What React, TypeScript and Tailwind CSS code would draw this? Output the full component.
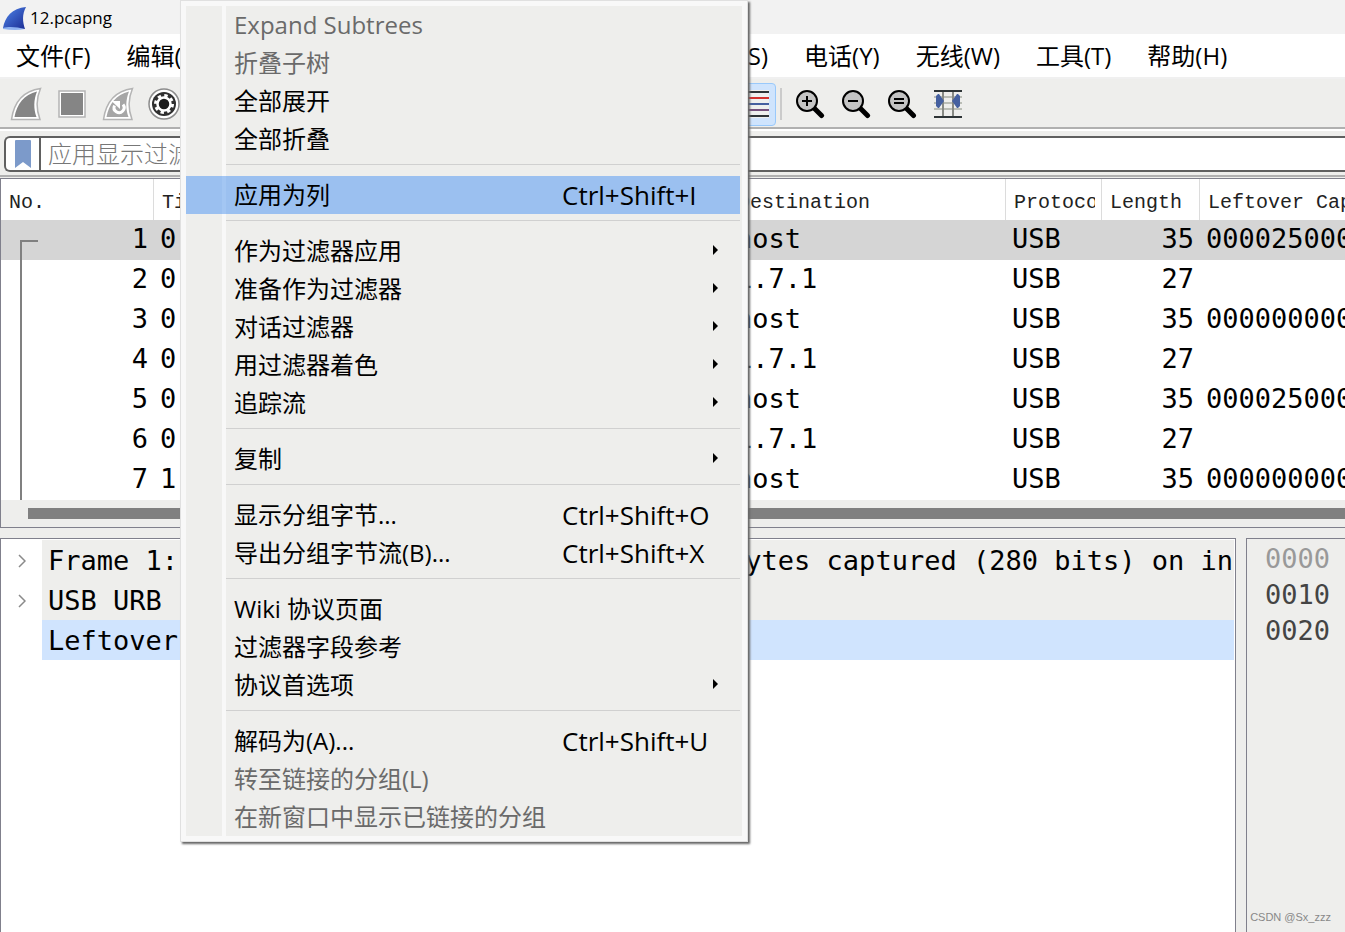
import type { ReactNode } from "react";
import {
  ArrowDown,
  ArrowLeft,
  ArrowRight,
  ArrowUp,
  FileText,
  FolderOpen,
  List,
  RotateCw,
  Save,
  Search,
  X,
} from "lucide-react";

const menus = [
  "文件(F)",
  "编辑(E)",
  "视图(V)",
  "跳转(G)",
  "捕获(C)",
  "分析(A)",
  "统计(S)",
  "电话(Y)",
  "无线(W)",
  "工具(T)",
  "帮助(H)",
];

const packets = [
  { no: 1, time: "0.000000", source: "1.7.1", destination: "host", length: 35, data: "0000250000000000" },
  { no: 2, time: "0.000031", source: "host", destination: "1.7.1", length: 27, data: "" },
  { no: 3, time: "0.087964", source: "1.7.1", destination: "host", length: 35, data: "0000000000000000" },
  { no: 4, time: "0.087991", source: "host", destination: "1.7.1", length: 27, data: "" },
  { no: 5, time: "0.903968", source: "1.7.1", destination: "host", length: 35, data: "0000250000000000" },
  { no: 6, time: "0.903997", source: "host", destination: "1.7.1", length: 27, data: "" },
  { no: 7, time: "1.007973", source: "1.7.1", destination: "host", length: 35, data: "0000000000000000" },
];

type Item = {
  label: string;
  shortcut?: string;
  submenu?: boolean;
  disabled?: boolean;
  active?: boolean;
};

const contextMenu: Item[][] = [
  [
    { label: "Expand Subtrees", disabled: true },
    { label: "折叠子树", disabled: true },
    { label: "全部展开" },
    { label: "全部折叠" },
  ],
  [{ label: "应用为列", shortcut: "Ctrl+Shift+I", active: true }],
  [
    { label: "作为过滤器应用", submenu: true },
    { label: "准备作为过滤器", submenu: true },
    { label: "对话过滤器", submenu: true },
    { label: "用过滤器着色", submenu: true },
    { label: "追踪流", submenu: true },
  ],
  [{ label: "复制", submenu: true }],
  [
    { label: "显示分组字节...", shortcut: "Ctrl+Shift+O" },
    { label: "导出分组字节流(B)...", shortcut: "Ctrl+Shift+X" },
  ],
  [
    { label: "Wiki 协议页面" },
    { label: "过滤器字段参考" },
    { label: "协议首选项", submenu: true },
  ],
  [
    { label: "解码为(A)...", shortcut: "Ctrl+Shift+U" },
    { label: "转至链接的分组(L)", disabled: true },
    { label: "在新窗口中显示已链接的分组", disabled: true },
  ],
];

function ToolButton({ label, pressed, children }: { label: string; pressed?: boolean; children: ReactNode }) {
  return (
    <button
      type="button"
      aria-label={label}
      className={
        pressed
          ? "flex h-[43px] w-[42px] shrink-0 items-center justify-center rounded-sm border border-[#99c9fb] bg-[#cfe4fd]"
          : "flex h-[43px] w-[42px] shrink-0 items-center justify-center"
      }
    >
      {children}
    </button>
  );
}

function Fin({ restart }: { restart?: boolean }) {
  return (
    <svg width="32" height="34" viewBox="0 0 32 34">
      <path d="M1.5 32.5C4 15 13 4 30.5 1.5C26 12 26 22 30 32.5Z" fill="#fff" stroke="#b4b4b4" strokeWidth="1.5" />
      <path d="M4.5 30C7 17 14 7.500 27 4.500C23.500 13 23.500 22 26.500 30Z" fill={restart ? "#a6a6a6" : "#858585"} />
      {restart && (
        <>
          <path d="M21 17.500a5 5 0 1 1-8.500 1" fill="none" stroke="#fff" strokeWidth="3" />
          <path d="M9.500 14h8.500v8z" fill="#fff" />
        </>
      )}
    </svg>
  );
}

function Magnifier({ sign }: { sign: string }) {
  return (
    <svg width="30" height="30" viewBox="0 0 30 30">
      <path d="M19.500 19.500L26.500 26.500" stroke="#000" strokeWidth="5" strokeLinecap="round" />
      <circle cx="12" cy="12" r="10" fill="#c4c4c4" stroke="#000" strokeWidth="2" />
      <path d={sign} stroke="#000" strokeWidth="2" />
    </svg>
  );
}

function Toolbar() {
  return (
    <div className="flex h-[50px] items-center gap-1 overflow-hidden border-b-2 border-[#b0b0b0] bg-[#eeeeec] pt-[2px] pl-[5px]">
      <ToolButton label="开始捕获">
        <Fin />
      </ToolButton>
      <ToolButton label="停止捕获">
        <svg width="28" height="28" viewBox="0 0 28 28">
          <rect x="1" y="1" width="26" height="26" fill="#fff" stroke="#b4b4b4" strokeWidth="1.500" />
          <rect x="3" y="3" width="22" height="22" fill="#858585" />
        </svg>
      </ToolButton>
      <ToolButton label="重新开始捕获">
        <Fin restart />
      </ToolButton>
      <ToolButton label="捕获选项">
        <svg width="32" height="32" viewBox="0 0 32 32">
          <circle cx="16" cy="16" r="15" fill="#fff" stroke="#8c8c8c" strokeWidth="1.500" />
          <circle cx="16" cy="16" r="12" fill="#303030" />
          <circle cx="16" cy="16" r="8.500" fill="none" stroke="#fff" strokeWidth="3" strokeDasharray="3.340 3.340" />
          <circle cx="16" cy="16" r="6.500" fill="#1c1c1c" stroke="#fff" strokeWidth="2.500" />
        </svg>
      </ToolButton>
      <div className="flex w-[541px] shrink-0 items-center justify-between text-[#3d5b9b]">
        <ToolButton label="打开"><FolderOpen size={28} /></ToolButton>
        <ToolButton label="保存"><Save size={28} /></ToolButton>
        <ToolButton label="关闭"><X size={28} /></ToolButton>
        <ToolButton label="重新加载"><RotateCw size={28} /></ToolButton>
        <ToolButton label="查找"><Search size={28} /></ToolButton>
        <ToolButton label="后退"><ArrowLeft size={28} /></ToolButton>
        <ToolButton label="前进"><ArrowRight size={28} /></ToolButton>
        <ToolButton label="转到分组"><FileText size={28} /></ToolButton>
        <ToolButton label="首个分组"><ArrowUp size={28} /></ToolButton>
        <ToolButton label="最新分组"><ArrowDown size={28} /></ToolButton>
        <ToolButton label="自动滚动"><List size={28} /></ToolButton>
      </div>
      <ToolButton label="着色" pressed>
        <svg width="28" height="28" viewBox="0 0 28 28">
          <rect width="28" height="28" fill="#eef0ee" />
          <path d="M0 2h28M0 26h28" stroke="#2e3436" strokeWidth="2" />
          <path d="M0 8h28" stroke="#d2322d" strokeWidth="2" />
          <path d="M0 14h28" stroke="#4560a0" strokeWidth="2" />
          <path d="M0 20h28" stroke="#75507b" strokeWidth="2" />
        </svg>
      </ToolButton>
      <div className="flex w-[5px] shrink-0">
        <div className="h-8 w-[2px] bg-[#cbcbcb]" />
      </div>
      <ToolButton label="放大">
        <Magnifier sign="M7 12h10M12 7v10" />
      </ToolButton>
      <ToolButton label="缩小">
        <Magnifier sign="M7 12h10" />
      </ToolButton>
      <ToolButton label="正常大小">
        <Magnifier sign="M7 10h10M7 14h10" />
      </ToolButton>
      <ToolButton label="调整列宽">
        <svg width="28" height="28" viewBox="0 0 28 28">
          <path d="M0 7h28M0 13h28M0 19h28" stroke="#babdb6" strokeWidth="2" />
          <path d="M9 0v28M19 0v28" stroke="#888a85" strokeWidth="2" />
          <path d="M0 1h28M0 27h28" stroke="#2e3436" strokeWidth="2" />
          <path d="M2 6l2-2h1l5 7-5 7h-1l-2-2zM26 6l-2-2h-1l-5 7 5 7h1l2-2z" fill="#4560a0" />
        </svg>
      </ToolButton>
    </div>
  );
}

function FilterBar() {
  return (
    <div className="border-t-2 border-b-2 border-t-white border-b-[#b0b0b0] bg-[#eeeeec] pt-[5px] pb-[3px] pl-1">
      <div className="flex h-9 items-center rounded-l-md border-2 border-r-0 border-[#606060] bg-white">
        <button type="button" aria-label="管理书签" className="flex h-full w-[35px] items-center justify-center border-r-2 border-[#606060]">
          <svg width="16" height="28" viewBox="0 0 16 28">
            <path d="M0 1q0-1 1-1h14q1 0 1 1v27l-8-6-8 6z" fill="#7c9aca" />
          </svg>
        </button>
        <input
          type="text"
          aria-label="显示过滤器"
          placeholder="应用显示过滤器 … <Ctrl-/>"
          className="h-full min-w-0 flex-1 bg-transparent px-[7px] pb-[2px] text-2xl font-light outline-none placeholder:text-[#777]"
        />
      </div>
    </div>
  );
}

function PacketList() {
  return (
    <section className="relative mt-px border-y border-l border-[#80808c] bg-white">
      <table className="w-full table-fixed border-separate border-spacing-0 font-['DejaVu_Sans_Mono',monospace] text-[27px] whitespace-nowrap">
        <colgroup>
          <col className="w-[153px]" />
          <col className="w-[287px]" />
          <col className="w-[289px]" />
          <col className="w-[276px]" />
          <col className="w-[96px]" />
          <col className="w-[98px]" />
          <col />
        </colgroup>
        <thead className="font-['Liberation_Mono',monospace] text-xl text-[#222]">
          <tr>
            {["No.", "Time", "Source", "Destination", "Protocol", "Length", "Leftover Capture Data"].map((name) => (
              <th
                key={name}
                className="h-[41px] border-r border-[#dcdcdc] pt-[6px] pr-[6px] pl-2 text-left font-normal last:border-r-0 last:pr-0"
              >
                <div className="overflow-hidden">{name}</div>
              </th>
            ))}
          </tr>
        </thead>
        <tbody className="leading-9">
          {packets.map((p) => (
            <tr key={p.no} className={p.no === 1 ? "h-10 bg-[#d5d5d5]" : "h-10"}>
              <td className="pr-[6px] pb-[2px] text-right">{p.no}</td>
              <td className="pb-[2px] pl-[6px]">{p.time}</td>
              <td className="pb-[2px] pl-[6px]">{p.source}</td>
              <td className="pb-[2px] pl-[6px]">{p.destination}</td>
              <td className="pb-[2px] pl-[6px]">USB</td>
              <td className="pr-[6px] pb-[2px] text-right">{p.length}</td>
              <td className="overflow-hidden pb-[2px] pl-[6px]">{p.data}</td>
            </tr>
          ))}
        </tbody>
      </table>
      {/* conversation bracket running down from the first packet */}
      <div className="absolute top-[61px] bottom-[27px] left-[19px] w-[18px] border-t-2 border-l-2 border-[#808080]" />
      <div className="flex h-[27px] items-center bg-[#eeeeec] pl-[27px]">
        <div className="h-[11px] flex-1 bg-[#808080]" />
      </div>
    </section>
  );
}

function Chevron() {
  return (
    <span className="flex w-[41px] shrink-0 items-center justify-center bg-white pt-px">
      <svg width="8" height="14" viewBox="0 0 8 14">
        <path d="M1 1l6 6-6 6" fill="none" stroke="#8a8a8a" strokeWidth="1.500" />
      </svg>
    </span>
  );
}

function Details() {
  return (
    <section className="min-w-0 flex-1 border border-b-0 border-[#80808c] bg-white pt-px pr-px font-['DejaVu_Sans_Mono',monospace] text-[27px] leading-[42px] whitespace-pre">
      <div className="flex h-10 bg-[#eeeeec]">
        <Chevron />
        <div className="flex min-w-0 flex-1 justify-between overflow-hidden pr-px pl-[6px]">
          <span>Frame 1: 35 bytes on wire (280 bits), 35</span>
          <span>bytes captured (280 bits) on in</span>
        </div>
      </div>
      <div className="flex h-10 bg-[#eeeeec]">
        <Chevron />
        <div className="pl-[6px]">USB URB</div>
      </div>
      <div className="ml-[41px] h-10 overflow-hidden bg-[#d0e4fe] pl-[6px]">Leftover Capture Data: 0000250000000000</div>
    </section>
  );
}

function ContextMenu() {
  return (
    <div
      role="menu"
      className="absolute top-0 left-[180px] w-[568px] border border-[#e0e0e0] bg-[#f8f8f8] p-[5px] shadow-[2px_2px_2px_#666]"
    >
      <div className="bg-[linear-gradient(to_right,#eeeeec_36px,#f8f8f8_36px,#f8f8f8_40px,#eeeeec_40px)] pr-[2px]">
        {contextMenu.map((group, i) => (
          <div key={i}>
            {i > 0 && <div className="mt-[6px] mb-[11px] ml-10 h-px bg-[#d0d0d0]" />}
            {group.map((item) => (
              <button
                key={item.label}
                type="button"
                role="menuitem"
                disabled={item.disabled}
                className={
                  item.active
                    ? "flex h-[38px] w-full items-center bg-[linear-gradient(to_right,#9bc0f0_36px,#a3c6f3_36px,#a3c6f3_40px,#9bc0f0_40px)] pl-12 text-left"
                    : "flex h-[38px] w-full items-center pl-12 text-left disabled:text-[#6a6a6a]"
                }
              >
                <span className="w-[328px] whitespace-nowrap">{item.label}</span>
                {item.shortcut && <span className="text-[26px]">{item.shortcut}</span>}
                {item.submenu && (
                  <svg className="mr-[22px] mb-[2px] ml-auto" width="5" height="10" viewBox="0 0 5 10">
                    <path d="M0 0l5 5-5 5z" fill="#000" />
                  </svg>
                )}
              </button>
            ))}
          </div>
        ))}
      </div>
    </div>
  );
}

export default function App() {
  return (
    <div className="relative flex min-h-screen flex-col overflow-hidden bg-[#eeeeec] font-['Open_Sans','Noto_Sans_CJK_SC',sans-serif] text-2xl text-black">
      <header className="flex h-[34px] items-center gap-[3px] bg-[#f2f2f2] pt-[2px] pl-[2px] text-[17px]">
        <svg width="25" height="25" viewBox="0 0 25 25">
          <defs>
            <linearGradient id="fin" x1="0" y1="0" x2="1" y2="1">
              <stop offset="0" stopColor="#4f86ea" />
              <stop offset="1" stopColor="#1a2b93" />
            </linearGradient>
          </defs>
          <path d="M1 22C3 11 10 2 24 1C20 8 20.500 16 23 23Z" fill="url(#fin)" />
          <path d="M1 22c6-2 14-1 22 1c-7 1.500-15 1-22 0z" fill="#8db1f0" />
        </svg>
        <h1>12.pcapng</h1>
      </header>
      <nav className="flex h-[45px] items-center gap-9 border-b-2 border-[#f0f0f0] bg-white pl-4 whitespace-nowrap">
        {menus.map((name) => (
          <button key={name} type="button">
            {name}
          </button>
        ))}
      </nav>
      <Toolbar />
      <FilterBar />
      <PacketList />
      <main className="mt-[10px] flex flex-1 gap-[10px]">
        <Details />
        <section className="w-[99px] shrink-0 border-t border-l border-[#80808c] pt-[2px] pl-[18px] font-['DejaVu_Sans_Mono',monospace] text-[27px] leading-9 text-[#444]">
          <p className="text-[#999]">0000</p>
          <p>0010</p>
          <p>0020</p>
        </section>
      </main>
      <ContextMenu />
      <p className="absolute right-[14px] bottom-[7px] font-['Liberation_Sans',sans-serif] text-[11px] text-[#888]">
        CSDN @Sx_zzz
      </p>
    </div>
  );
}
